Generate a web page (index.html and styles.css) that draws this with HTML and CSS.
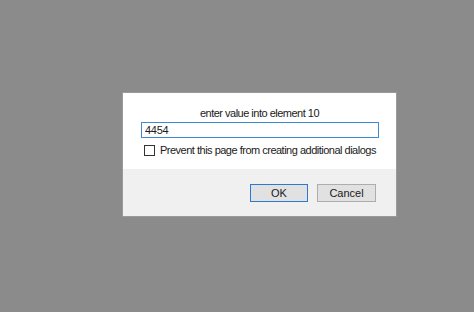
FILE: index.html
```html
<!DOCTYPE html>
<html lang="en">
<head>
  <meta charset="UTF-8">
  <meta name="viewport" content="width=device-width, initial-scale=1.0">
  <title>Prompt</title>
  <link rel="stylesheet" href="styles.css">
</head>
<body>
  <div class="dialog">
    <div class="dialog-body">
      <p class="message">enter value into element 10</p>
      <input type="text" class="prompt-input" value="4454">
      <label class="check-row">
        <span class="checkbox"></span>
        Prevent this page from creating additional dialogs
      </label>
    </div>
    <div class="dialog-footer">
      <button class="btn btn-primary">OK</button>
      <button class="btn">Cancel</button>
    </div>
  </div>
</body>
</html>
```

FILE: styles.css
```css
:root {
  --color-backdrop: #8b8b8b;
  --color-dialog: #ffffff;
  --color-footer: #f0f0f0;
  --color-border: #9a9a9a;
  --color-focus: #3c8ad6;
  --color-text: #1a1a1a;
}

* {
  margin: 0;
  padding: 0;
  box-sizing: border-box;
  font-family: "Liberation Sans", Arial, sans-serif;
}

body {
  background-color: var(--color-backdrop);
  color: var(--color-text);
  height: 312px;
  padding: 92px 0 0 122px;
}

.dialog {
  width: 275px;
  height: 125px;
  background-color: var(--color-dialog);
  border: 1px solid var(--color-border);
  display: flex;
  flex-direction: column;
}

.dialog-body {
  height: 76px;
  padding: 14px 18px 0 18px;
  display: flex;
  flex-direction: column;
}

.message {
  font-size: 11px;
  letter-spacing: -0.5px;
  text-align: center;
  line-height: 13px;
  margin-bottom: 2px;
}

.prompt-input {
  width: 238px;
  height: 16px;
  border: 1px solid var(--color-focus);
  font-size: 11px;
  letter-spacing: -0.3px;
  padding: 0 3px;
  color: var(--color-text);
  outline: none;
}

.check-row {
  display: flex;
  align-items: center;
  gap: 5px;
  margin-top: 6px;
  margin-left: 3px;
  font-size: 11px;
  letter-spacing: -0.5px;
  line-height: 13px;
  white-space: nowrap;
}

.checkbox {
  width: 11px;
  height: 11px;
  border: 1px solid #333333;
  background-color: #ffffff;
}

.dialog-footer {
  flex: 1;
  background-color: var(--color-footer);
  display: flex;
  justify-content: flex-end;
  gap: 9px;
  padding: 15px 20px 0 0;
}

.btn {
  width: 59px;
  height: 18px;
  background-color: #e1e1e1;
  border: 1px solid #adadad;
  font-size: 11px;
  color: var(--color-text);
}

.btn-primary {
  width: 58px;
  border: 1px solid #2a7ad0;
}
```
